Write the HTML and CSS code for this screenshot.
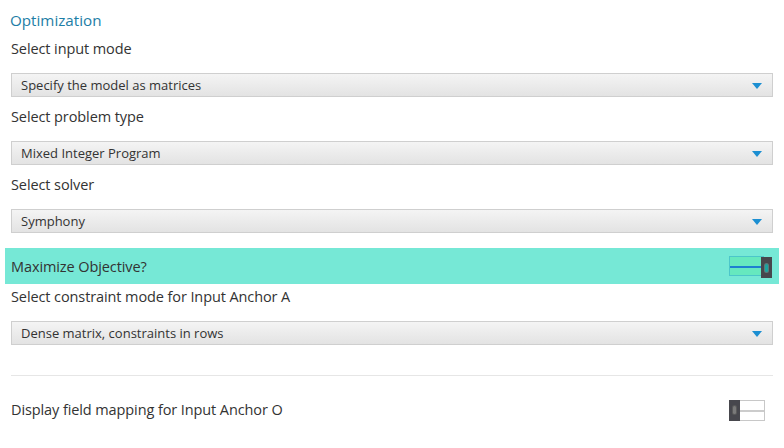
FILE: index.html
```html
<!DOCTYPE html>
<html>
<head>
<meta charset="utf-8">
<link rel="stylesheet" href="styles.css">
</head>
<body>
<div class="panel">
  <div class="title">Optimization</div>

  <div class="group">
    <div class="label">Select input mode</div>
    <div class="select"><span>Specify the model as matrices</span><i class="arrow"></i></div>
  </div>
  <div class="group">
    <div class="label">Select problem type</div>
    <div class="select"><span>Mixed Integer Program</span><i class="arrow"></i></div>
  </div>
  <div class="group last">
    <div class="label">Select solver</div>
    <div class="select"><span>Symphony</span><i class="arrow"></i></div>
  </div>

  <div class="band">
    <div class="band-label">Maximize Objective?</div>
    <div class="toggle on"><div class="line"></div><div class="knob"><div class="pip"></div></div></div>
  </div>

  <div class="group">
    <div class="label">Select constraint mode for Input Anchor A</div>
    <div class="select"><span>Dense matrix, constraints in rows</span><i class="arrow"></i></div>
  </div>

  <div class="sep"></div>

  <div class="row">
    <div class="label">Display field mapping for Input Anchor O</div>
    <div class="toggle off"><div class="line"></div><div class="knob"><div class="pip"></div></div></div>
  </div>
</div>
</body>
</html>
```

FILE: styles.css
```css
html, body {
  margin: 0;
  padding: 0;
  background: #ffffff;
}
body {
  font-family: "Open Sans", "Noto Sans", sans-serif;
  color: #333333;
  width: 784px;
  height: 448px;
  overflow: hidden;
}
.panel {
  padding: 0 5px;
}
.title {
  margin-top: 8px;
  padding-left: 5px;
  height: 24px;
  line-height: 24px;
  font-size: 15.2px;
  color: #1d7ea6;
}
.group {
  padding: 4px 6px 7px 6px;
}
.group + .group {
  padding-top: 0;
}
.group.last {
  padding-bottom: 15px;
}
.label {
  height: 24px;
  line-height: 24px;
  font-size: 14.5px;
  color: #333333;
  letter-spacing: -0.1px;
}
.group .label {
  line-height: 26px;
}
.select {
  margin-top: 13px;
  height: 22px;
  border: 1px solid #cfcfcf;
  background: linear-gradient(#f4f4f4, #e3e3e3);
  display: flex;
  align-items: center;
  justify-content: space-between;
  padding: 0 10px 0 9px;
  font-size: 13px;
  color: #333333;
}
.arrow {
  width: 0;
  height: 0;
  border-left: 5px solid transparent;
  border-right: 5px solid transparent;
  border-top: 6px solid #1c8fd2;
  margin-top: 1px;
}
.band {
  background: #76e8d6;
  height: 36px;
  display: flex;
  align-items: center;
  justify-content: space-between;
  padding: 0 15px 0 6px;
}
.band-label {
  font-size: 14.5px;
  color: #333333;
  letter-spacing: -0.1px;
  padding-top: 1px;
}
.band + .group {
  padding-top: 0;
}
.toggle {
  position: relative;
  width: 35px;
  height: 20px;
  box-sizing: border-box;
}
.toggle .line {
  position: absolute;
  left: 0;
  right: 0;
  top: 9px;
  height: 2px;
}
.toggle .knob {
  position: absolute;
  top: 0;
  width: 11px;
  height: 21px;
  background: #47474d;
  display: flex;
  align-items: center;
  justify-content: center;
}
.toggle .pip {
  width: 3px;
  height: 8px;
  border-radius: 2px;
}
.toggle.on {
  background: #66e8bf;
  border: 1px solid #4cc6ca;
}
.toggle.on .line {
  background: #1e7fd0;
}
.toggle.on .knob {
  left: 31px;
  top: 0;
}
.toggle.on .pip {
  background: #1aa3a0;
  box-shadow: 0 0 0 1px #5c7a7a;
}
.toggle.off {
  background: #ffffff;
  border: 1px solid #c8c8c8;
  width: 36px;
  height: 21px;
}
.toggle.off .line {
  background: #cccccc;
}
.toggle.off .knob {
  left: -1px;
  top: -1px;
  height: 21px;
}
.toggle.off .pip {
  background: #7a7a7a;
  box-shadow: 0 0 0 1px #5a5a5a;
}
.sep {
  margin: 23px 6px 0 6px;
  height: 1px;
  background: #e6e6e6;
}
.row {
  margin-top: 16px;
  height: 36px;
  display: flex;
  align-items: center;
  justify-content: space-between;
  padding: 0 14px 0 6px;
}
```
